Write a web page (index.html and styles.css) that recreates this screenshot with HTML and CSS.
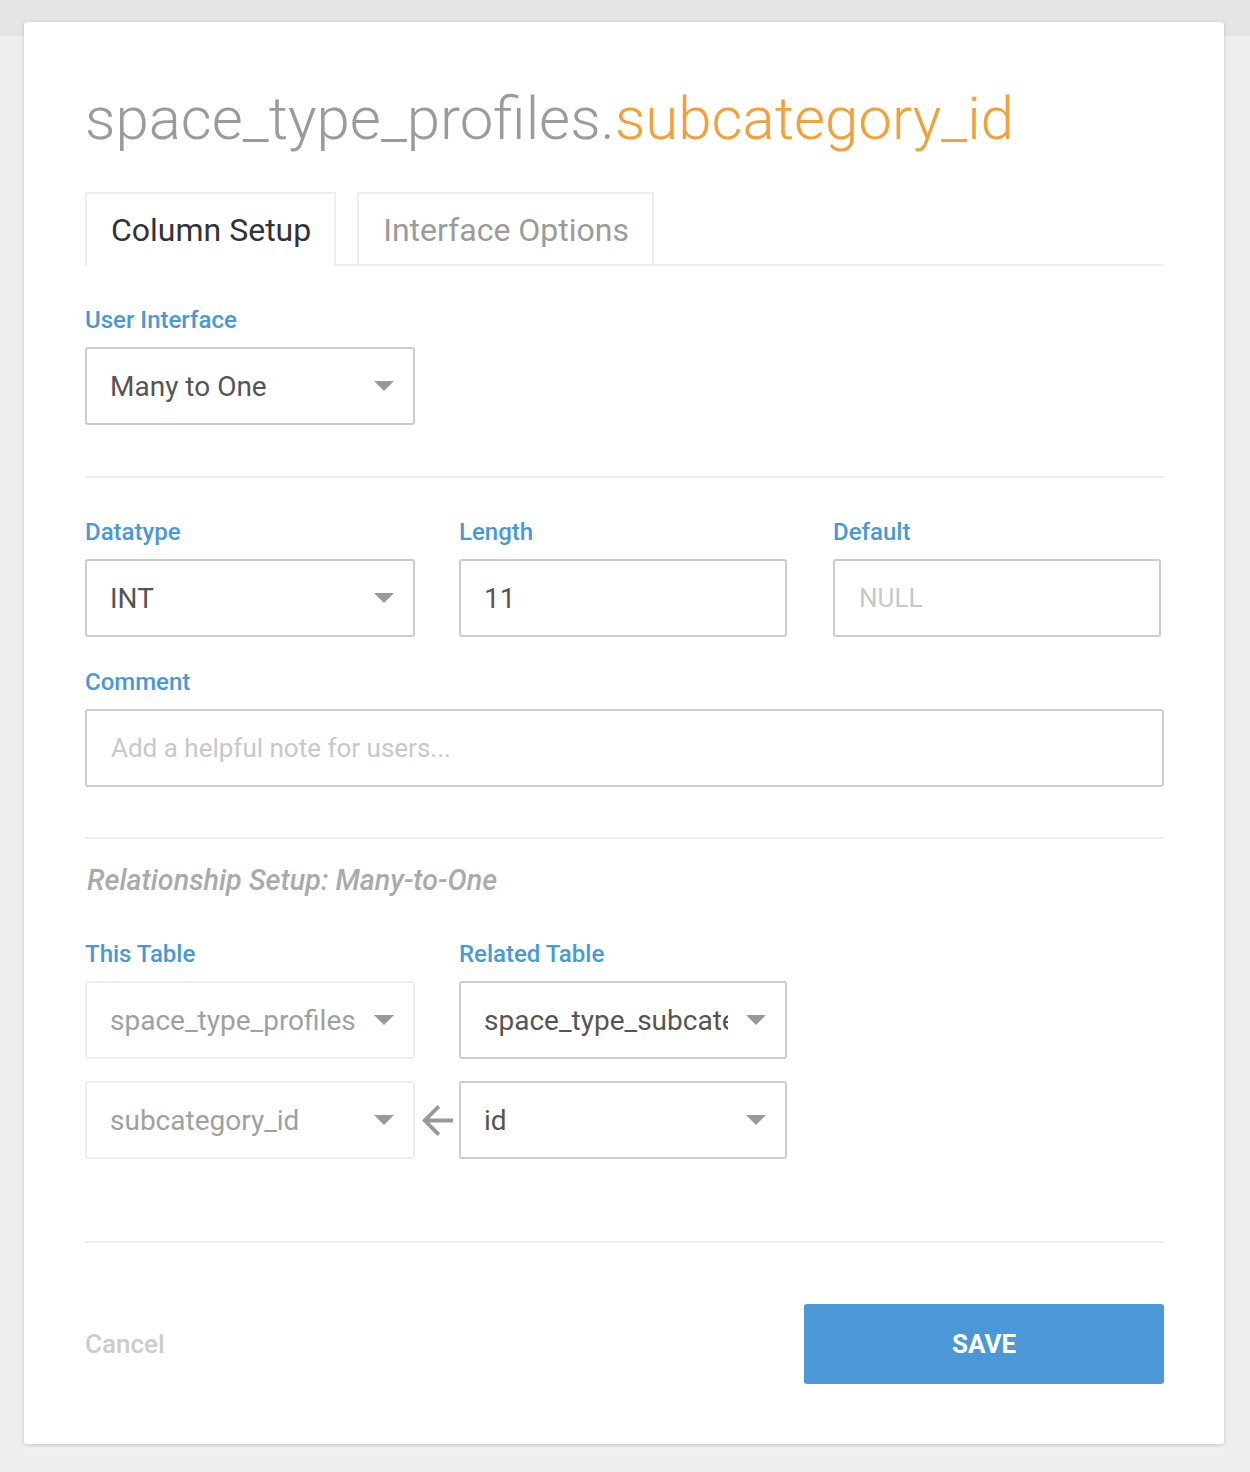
FILE: index.html
```html
<!DOCTYPE html>
<html lang="en">
<head>
<meta charset="utf-8">
<title>Column Setup</title>
<link rel="stylesheet" href="styles.css">
</head>
<body>
<div class="page">
  <div class="modal">
    <h1 class="title"><span class="t-table">space_type_profiles.</span><span class="t-col">subcategory_id</span></h1>

    <div class="tabs">
      <div class="tab active">Column Setup</div>
      <div class="tab">Interface Options</div>
    </div>

    <section class="section sec-ui">
      <div class="field w330">
        <div class="label">User Interface</div>
        <div class="box select">
          <span class="val">Many to One</span>
          <svg class="caret" width="20" height="10" viewBox="0 0 20 10"><path d="M0 0h20L10 10z"/></svg>
        </div>
      </div>
    </section>

    <section class="section sec-col">
      <div class="row3">
        <div class="field">
          <div class="label">Datatype</div>
          <div class="box select">
            <span class="val">INT</span>
            <svg class="caret" width="20" height="10" viewBox="0 0 20 10"><path d="M0 0h20L10 10z"/></svg>
          </div>
        </div>
        <div class="field">
          <div class="label">Length</div>
          <div class="box"><span class="val">11</span></div>
        </div>
        <div class="field">
          <div class="label">Default</div>
          <div class="box"><span class="val placeholder">NULL</span></div>
        </div>
      </div>
      <div class="field comment">
        <div class="label">Comment</div>
        <div class="box"><span class="val placeholder">Add a helpful note for users...</span></div>
      </div>
    </section>

    <section class="section sec-rel">
      <h2 class="rel-title">Relationship Setup: Many-to-One</h2>
      <div class="rel-labels">
        <div class="label">This Table</div>
        <div></div>
        <div class="label">Related Table</div>
      </div>
      <div class="rel-grid">
        <div class="box select disabled">
          <span class="val">space_type_profiles</span>
          <svg class="caret" width="20" height="10" viewBox="0 0 20 10"><path d="M0 0h20L10 10z"/></svg>
        </div>
        <div></div>
        <div class="box select">
          <span class="val">space_type_subcategories</span>
          <svg class="caret" width="20" height="10" viewBox="0 0 20 10"><path d="M0 0h20L10 10z"/></svg>
        </div>
        <div class="box select disabled">
          <span class="val">subcategory_id</span>
          <svg class="caret" width="20" height="10" viewBox="0 0 20 10"><path d="M0 0h20L10 10z"/></svg>
        </div>
        <div class="arrow-cell">
          <svg class="arrow" width="31" height="31" viewBox="4 4 16 16"><path d="M20 11H7.83l5.59-5.59L12 4l-8 8 8 8 1.41-1.41L7.83 13H20v-2z"/></svg>
        </div>
        <div class="box select">
          <span class="val">id</span>
          <svg class="caret" width="20" height="10" viewBox="0 0 20 10"><path d="M0 0h20L10 10z"/></svg>
        </div>
      </div>
    </section>

    <footer class="footer">
      <span class="cancel">Cancel</span>
      <button class="save" type="button">SAVE</button>
    </footer>
  </div>
</div>
</body>
</html>
```

FILE: styles.css
```css
html, body {
  margin: 0;
  padding: 0;
}

body {
  font-family: Roboto, "Liberation Sans", Arial, sans-serif;
  background: linear-gradient(#e4e4e4 0, #e4e4e4 36px, #efefef 36px);
  min-height: 1472px;
  color: #555;
}

.page {
  padding: 22px 0 28px 24px;
}

.modal {
  box-sizing: border-box;
  width: 1200px;
  background: #fff;
  border-radius: 3px;
  box-shadow: 0 1px 4px rgba(0, 0, 0, 0.18);
  padding: 61px 60px 60px 61px;
}

.title {
  margin: 0;
  font-size: 60px;
  font-weight: 300;
  line-height: 72px;
  white-space: nowrap;
  letter-spacing: 0;
}

.t-table { color: #9b9b9b; }
.t-col { color: #f3a03b; }

.tabs {
  margin-top: 37px;
  display: flex;
  gap: 21px;
  border-bottom: 2px solid #eeeeee;
}

.tab {
  box-sizing: border-box;
  height: 74px;
  margin-bottom: -2px;
  padding: 17px 23px 17px 24px;
  border: 2px solid #eeeeee;
  border-bottom: none;
  font-size: 32px;
  line-height: 38px;
  color: #9b9b9b;
  white-space: nowrap;
}

.tab.active {
  background: #fff;
  color: #333;
}

.section {
  border-bottom: 2px solid #eeeeee;
}

.sec-ui { padding: 40px 0 51px; }
.sec-col { padding: 40px 0 50px; }
.sec-rel { padding: 25px 0 82px; }

.w330 { width: 330px; }

.label {
  font-size: 24px;
  font-weight: 500;
  line-height: 28px;
  color: #4a98d6;
  margin-bottom: 13px;
  white-space: nowrap;
}

.box {
  box-sizing: border-box;
  height: 78px;
  border: 2px solid #cccccc;
  border-radius: 3px;
  display: flex;
  align-items: center;
  padding: 0 19px 0 23px;
  font-size: 28px;
  color: #555;
  background: #fff;
}

.val {
  flex: 1;
  min-width: 0;
  overflow: hidden;
  white-space: nowrap;
}

.placeholder {
  font-size: 26px;
  color: #c8c8c8;
  padding-left: 1px;
}

.caret {
  flex: none;
  margin-left: 18px;
  fill: #999;
}

.box.disabled {
  border-color: #eeeeee;
  color: #a0a0a0;
}

.row3 {
  display: grid;
  grid-template-columns: 330px 44px 328px 46px 328px;
}

.row3 > .field:nth-child(2) { grid-column: 3; }
.row3 > .field:nth-child(3) { grid-column: 5; }

.comment {
  margin-top: 31px;
}

.rel-title {
  margin: 0;
  padding-left: 2px;
  font-size: 28.7px;
  font-weight: 500;
  font-style: italic;
  line-height: 32px;
  color: #aaaaaa;
}

.rel-labels {
  margin-top: 44px;
  display: grid;
  grid-template-columns: 330px 44px 328px;
}

.rel-grid {
  display: grid;
  grid-template-columns: 330px 44px 328px;
  row-gap: 22px;
}

.arrow-cell {
  display: flex;
  align-items: center;
  justify-content: center;
}

.arrow {
  fill: #999;
}

.footer {
  padding-top: 61px;
  display: flex;
  justify-content: space-between;
  align-items: center;
}

.cancel {
  font-size: 26px;
  font-weight: 500;
  color: #cccccc;
}

.save {
  width: 360px;
  height: 80px;
  border: none;
  border-radius: 3px;
  background: #4c98d7;
  color: #fff;
  font-family: Roboto, "Liberation Sans", Arial, sans-serif;
  font-size: 26px;
  font-weight: 700;
  padding: 0;
  cursor: pointer;
}
```
